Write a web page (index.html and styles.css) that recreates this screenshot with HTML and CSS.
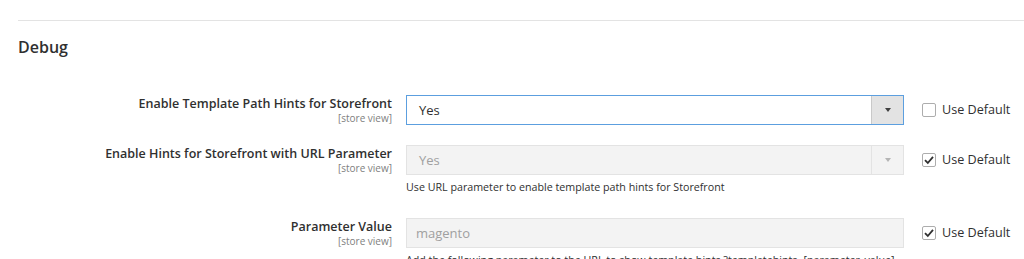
FILE: index.html
```html
<!DOCTYPE html>
<html>
<head>
<meta charset="utf-8">
<link rel="stylesheet" href="styles.css">
</head>
<body>
<div class="page">
  <div class="divider"></div>
  <h2 class="section-title">Debug</h2>
  <div class="rows">
    <div class="row">
      <div class="label">
        <div class="label-text">Enable Template Path Hints for Storefront</div>
        <div class="scope">[store view]</div>
      </div>
      <div class="control">
        <div class="select focused">
          <span class="value">Yes</span>
          <span class="btn"><span class="arrow"></span></span>
        </div>
      </div>
      <label class="use-default"><span class="check"></span>Use Default</label>
    </div>

    <div class="row row-2">
      <div class="label">
        <div class="label-text">Enable Hints for Storefront with URL Parameter</div>
        <div class="scope">[store view]</div>
      </div>
      <div class="control">
        <div class="select disabled">
          <span class="value">Yes</span>
          <span class="btn"><span class="arrow"></span></span>
        </div>
        <div class="note">Use URL parameter to enable template path hints for Storefront</div>
      </div>
      <label class="use-default"><span class="check checked"><svg viewBox="0 0 14 14" width="14" height="14"><path d="M3 7.2 L5.8 10 L11 3.8" fill="none" stroke="#303030" stroke-width="1.8"/></svg></span>Use Default</label>
    </div>

    <div class="row row-3">
      <div class="label">
        <div class="label-text">Parameter Value</div>
        <div class="scope">[store view]</div>
      </div>
      <div class="control">
        <div class="input disabled"><span class="value">magento</span></div>
        <div class="note">Add the following parameter to the URL to show template hints ?templatehints=[parameter_value]</div>
      </div>
      <label class="use-default"><span class="check checked"><svg viewBox="0 0 14 14" width="14" height="14"><path d="M3 7.2 L5.8 10 L11 3.8" fill="none" stroke="#303030" stroke-width="1.8"/></svg></span>Use Default</label>
    </div>
  </div>
</div>
</body>
</html>
```

FILE: styles.css
```css
html, body {
  margin: 0;
  padding: 0;
  background: #ffffff;
  overflow: hidden;
}
body {
  font-family: "Open Sans", "DejaVu Sans", sans-serif;
  color: #303030;
  width: 1024px;
  height: 259px;
}
.page {
  padding-top: 20px;
  padding-left: 18px;
}
.divider {
  height: 1px;
  background: #e3e3e3;
}
.section-title {
  margin: 16px 0 0 0;
  font-size: 16px;
  line-height: 20px;
  font-weight: 600;
  color: #303030;
}
.rows {
  margin-top: 38px;
  margin-left: -18px;
}
.row {
  display: flex;
  align-items: flex-start;
}
.row-2 {
  margin-top: 20px;
}
.row-3 {
  margin-top: 24px;
}
.label {
  width: 392px;
  text-align: right;
}
.label-text {
  font-size: 12.5px;
  line-height: 17px;
  font-weight: 600;
  color: #303030;
}
.scope {
  font-size: 10px;
  line-height: 10px;
  color: #808080;
  margin-top: 1px;
}
.control {
  margin-left: 14px;
  width: 498px;
}
.select, .input {
  box-sizing: border-box;
  height: 30px;
  display: flex;
  align-items: center;
  border: 1px solid #adadad;
  background: #fff;
  font-size: 13px;
}
.select .value {
  flex: 1;
  padding-left: 12px;
}
.input .value {
  padding-left: 9px;
}
.select.focused {
  border-color: #5c9fdf;
}
.btn {
  width: 31px;
  height: 100%;
  background: #e3e3e3;
  border-left: 1px solid #c9c9c9;
  display: flex;
  align-items: center;
  justify-content: center;
}
.arrow {
  width: 0;
  height: 0;
  border-left: 3.5px solid transparent;
  border-right: 3.5px solid transparent;
  border-top: 4px solid #404040;
}
.disabled {
  background: #f3f3f3;
  border-color: #e3e3e3;
  color: #a0a0a0;
}
.disabled .btn {
  background: #f3f3f3;
  border-left-color: #e3e3e3;
}
.disabled .arrow {
  border-top-color: #b5b5b5;
}
.note {
  font-size: 10.7px;
  line-height: 14px;
  margin-top: 5px;
  color: #303030;
  white-space: nowrap;
}
.use-default {
  margin-left: 18px;
  margin-top: 8px;
  display: flex;
  align-items: center;
  font-size: 12.6px;
  line-height: 14px;
  color: #303030;
}
.check {
  box-sizing: border-box;
  width: 14px;
  height: 14px;
  border: 1px solid #adadad;
  border-radius: 2px;
  background: #fff;
  margin-right: 6px;
  position: relative;
  display: inline-block;
}
.check svg {
  position: absolute;
  left: -1px;
  top: -1px;
}
```
